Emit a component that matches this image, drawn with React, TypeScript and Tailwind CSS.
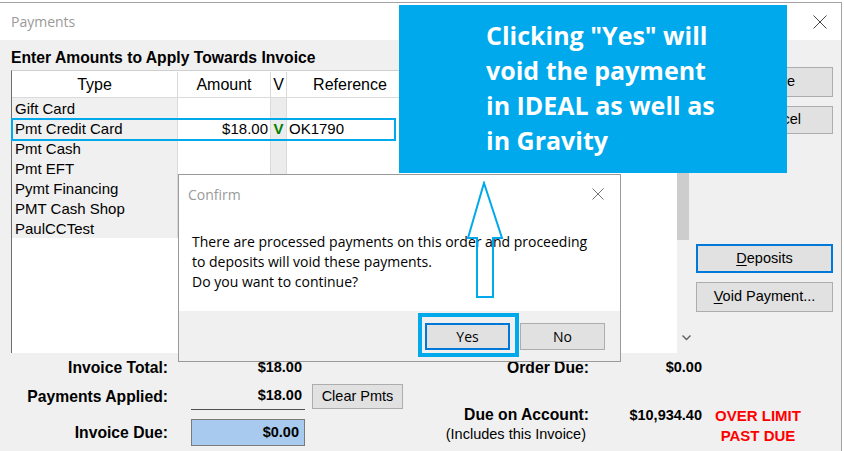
const ROWS = [
  { type: "Gift Card", amount: "", v: "", ref: "" },
  { type: "Pmt Credit Card", amount: "$18.00", v: "V", ref: "OK1790" },
  { type: "Pmt Cash", amount: "", v: "", ref: "" },
  { type: "Pmt EFT", amount: "", v: "", ref: "" },
  { type: "Pymt Financing", amount: "", v: "", ref: "" },
  { type: "PMT Cash Shop", amount: "", v: "", ref: "" },
  { type: "PaulCCTest", amount: "", v: "", ref: "" },
];

function CloseX({ size, color }: { size: number; color: string }) {
  return (
    <svg width={size} height={size} viewBox={`0 0 ${size} ${size}`}>
      <path d={`M0.5 0.5L${size - 0.5} ${size - 0.5}M${size - 0.5} 0.5L0.5 ${size - 0.5}`} stroke={color} strokeWidth="1" />
    </svg>
  );
}

export default function App() {
  return (
    <div className="relative w-[844px] h-[451px] overflow-hidden bg-white pt-[2px] font-['Liberation_Sans',Arial,sans-serif] text-black">
      <div className="w-[842px] h-[449px] border-t border-r border-[#a3a3a3] flex flex-col">
        {/* Title bar */}
        <div className="h-[37px] shrink-0 bg-white flex items-center justify-between pl-[11px] pr-[14px]">
          <span className="font-['Open_Sans',sans-serif] text-[14px] text-[#9a9a9a]">Payments</span>
          <CloseX size={14} color="#444" />
        </div>

        {/* Body */}
        <div className="flex-1 bg-[#f0f0f0] flex flex-col">
          <div className="flex">
            {/* Left: heading + grid */}
            <div className="w-[694px] pl-[11px] pt-[8px]">
              <h1 className="text-[15.7px] font-bold leading-[20px]">Enter Amounts to Apply Towards Invoice</h1>
              <div className="mt-[2px] h-[283px] flex">
                <div className="flex-1 bg-white border-l border-t border-l-[#6d6d6d] border-t-[#cfcfcf] flex flex-col">
                  {/* Header */}
                  <div className="h-[27px] shrink-0 grid grid-cols-[166px_93px_16px_126px_1fr] border-b border-[#dadada] text-[16px] leading-[25px] pt-[1px]">
                    <div className="border-r border-[#dadada] text-center">Type</div>
                    <div className="border-r border-[#dadada] text-center">Amount</div>
                    <div className="border-r border-[#dadada] text-center">V</div>
                    <div className="text-center">Reference</div>
                    <div />
                  </div>
                  {/* Rows */}
                  {ROWS.map((r) => (
                    <div key={r.type} className="h-[20px] grid grid-cols-[166px_93px_16px_126px_1fr] text-[15px] leading-[19px]">
                      <div className="bg-[#f0f0f0] border-r border-[#dadada] pl-[3px] pt-[1px] whitespace-nowrap">{r.type}</div>
                      <div className="border-r border-[#dadada] text-right pr-[2px] pt-[1px]">{r.amount}</div>
                      <div className="bg-[#ececec] border-r border-[#dadada] text-center pt-[1px] font-bold text-[#008000]">{r.v}</div>
                      <div className="pl-[2px] pt-[1px]">{r.ref}</div>
                      <div />
                    </div>
                  ))}
                </div>
                {/* Scrollbar */}
                <div className="w-[17px] bg-[#f0f0f0] flex flex-col pt-[18px]">
                  <div className="w-[12px] h-[152px] bg-[#cdcdcd]" />
                  <div className="flex-1" />
                  <div className="h-[18px] flex justify-center pl-[2px]">
                    <svg width="9" height="6" viewBox="0 0 9 6">
                      <path d="M0.5 0.5L4.5 4.5L8.5 0.5" stroke="#606060" strokeWidth="1.4" fill="none" />
                    </svg>
                  </div>
                </div>
              </div>
            </div>

            {/* Right: buttons */}
            <div className="ml-[2px] w-[137px] pt-[27px] flex flex-col text-[14.5px]">
              <button className="h-[30px] bg-[#e1e1e1] border border-[#adadad] pl-[28px]">Save</button>
              <button className="mt-[9px] h-[28px] bg-[#e1e1e1] border border-[#adadad] pl-[28px]">Cancel</button>
              <button className="mt-[110px] h-[29px] bg-[#e1e1e1] border-2 border-[#0078d7]">
                <span className="underline underline-offset-2">D</span>eposits
              </button>
              <button className="mt-[9px] h-[30px] bg-[#e1e1e1] border border-[#adadad]">
                <span className="underline underline-offset-2">V</span>oid Payment...
              </button>
            </div>
          </div>

          {/* Bottom totals */}
          <div className="flex pt-[3px]">
            <div className="w-[420px] flex flex-col">
              <div className="h-[24px] flex items-center">
                <div className="w-[168px] text-right font-bold text-[15.7px]">Invoice Total:</div>
                <div className="ml-[23px] w-[114px] text-right pr-[3px] font-bold text-[14.5px]">$18.00</div>
              </div>
              <div className="mt-[3px] h-[27px] flex items-center">
                <div className="w-[168px] text-right font-bold text-[15.7px]">Payments Applied:</div>
                <div className="ml-[23px] w-[114px] h-full flex items-center justify-end pr-[3px] border-b border-[#505050] font-bold text-[14.5px]">$18.00</div>
                <button className="ml-[7px] w-[91px] h-[25px] bg-[#e1e1e1] border border-[#adadad] text-[14.5px]">Clear Pmts</button>
              </div>
              <div className="mt-[9px] h-[27px] flex items-center">
                <div className="w-[168px] text-right font-bold text-[15.7px]">Invoice Due:</div>
                <div className="ml-[23px] w-[114px] h-full bg-[#a8caee] border border-[#7a7a7a] flex items-center justify-end pr-[5px] font-bold text-[14.5px]">$0.00</div>
              </div>
            </div>

            <div className="flex flex-col">
              <div className="h-[24px] flex items-center">
                <div className="w-[169px] text-right font-bold text-[15.7px]">Order Due:</div>
                <div className="w-[113px] text-right font-bold text-[14.5px]">$0.00</div>
              </div>
              <div className="mt-[25px] flex">
                <div className="w-[169px] flex flex-col items-end">
                  <div className="leading-[20px] font-bold text-[15.7px]">Due on Account:</div>
                  <div className="leading-[18px] text-[14.5px] pr-[3px]">(Includes this Invoice)</div>
                </div>
                <div className="w-[113px] text-right font-bold text-[14.5px] leading-[20px]">$10,934.40</div>
                <div className="ml-[13px] w-[86px] text-center text-[#ff0000] font-bold text-[15px] leading-[20px] pt-[1px]">
                  OVER LIMIT
                  <br />
                  PAST DUE
                </div>
              </div>
            </div>
          </div>
        </div>
      </div>

      {/* Selected row highlight */}
      <div className="absolute left-[11px] top-[118px] w-[385px] h-[23px] border-2 border-[#00a8ec]" />

      {/* Confirm dialog */}
      <div className="absolute left-[178px] top-[174px] w-[443px] h-[188px] border border-[#9a9a9a] bg-white flex flex-col font-['Open_Sans',sans-serif]">
        <div className="h-[38px] shrink-0 flex items-center justify-between pl-[9px] pr-[16px]">
          <span className="text-[14px] text-[#9a9a9a]">Confirm</span>
          <CloseX size={12} color="#777" />
        </div>
        <div className="flex-1 pt-[19px] pl-[13px] text-[14px] leading-[20px] text-black">
          There are processed payments on this order and proceeding
          <br />
          to deposits will void these payments.
          <br />
          Do you want to continue?
        </div>
        <div className="h-[50px] shrink-0 bg-[#f0f0f0] flex justify-end gap-[10px] pt-[12px] pr-[15px] text-[14px]">
          <button className="w-[85px] h-[27px] bg-[#e1e1e1] border-2 border-[#0078d7]">Yes</button>
          <button className="w-[85px] h-[27px] bg-[#e1e1e1] border border-[#adadad]">No</button>
        </div>
      </div>

      {/* Yes highlight */}
      <div className="absolute left-[418px] top-[313px] w-[101px] h-[44px] border-4 border-[#00a8ec]" />

      {/* Callout */}
      <div className="absolute left-[399px] top-[5px] w-[388px] h-[168px] bg-[#00a8ec] pl-[87px] pt-[13px] font-['Open_Sans',sans-serif] font-bold text-white text-[25px] leading-[35px]">
        Clicking "Yes" will
        <br />
        void the payment
        <br />
        in IDEAL as well as
        <br />
        in Gravity
      </div>

      {/* Arrow */}
      <svg className="absolute left-[466px] top-[181px]" width="38" height="118" viewBox="466 181 38 118">
        <path d="M484 183L502 238L493 238L493 297L477 297L477 238L468 238Z" stroke="#00a8ec" strokeWidth="2" fill="none" />
      </svg>
    </div>
  );
}
